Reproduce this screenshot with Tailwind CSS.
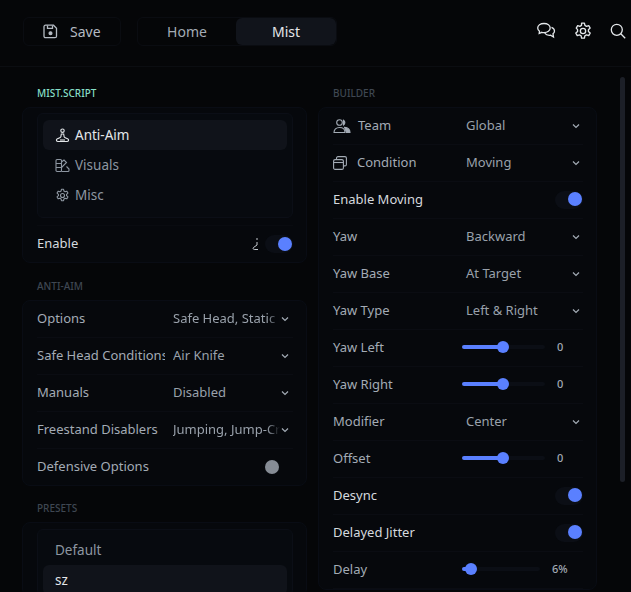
<!DOCTYPE html>
<html lang="en">
<head>
  <meta charset="UTF-8">
  <title>Mist</title>
  <script src="https://cdn.jsdelivr.net/npm/@tailwindcss/browser@4"></script>
</head>
<body class="bg-[#050608] font-['Noto_Sans',sans-serif] text-[13px] text-[#a3abb5]">
<div class="relative h-[592px] w-[631px] overflow-hidden">

  <!-- top bar -->
  <header class="flex h-[67px] items-start border-b border-[#0b0d11] pl-[23px] pt-[17px] text-[14px]">
    <button class="flex h-[29px] w-[98px] items-center rounded-md border border-[#0a0c11] pl-[19px] text-[#b4bac2]">
      <svg class="h-[15px] w-[15px]" viewBox="0 0 15 15" fill="none" stroke="#b4bac2" stroke-width="1.300"><path d="M2.500 1.200h8l3 3v8a1.500 1.500 0 0 1-1.500 1.500H2.500A1.500 1.500 0 0 1 1 12.200V2.700a1.500 1.500 0 0 1 1.500-1.500z"/><path d="M4.500 1.500v2.800h5V1.500"/><circle cx="7.500" cy="9.200" r="1.400" fill="#b4bac2"/></svg>
      <span class="ml-[12px]">Save</span>
    </button>
    <div class="ml-[16px] flex h-[29px] w-[200px] rounded-md border border-[#0a0c11]">
      <div class="flex w-[98px] items-center justify-center text-[#a3abb5]">Home</div>
      <div class="flex w-[100px] items-center justify-center rounded-md bg-[#11141b] text-[#e4e7ea]">Mist</div>
    </div>
    <div class="ml-auto flex items-center pr-[5px] pt-[4px] text-[#e4e7ea]">
      <svg class="h-[20px] w-[20px]" viewBox="0 0 20 20" fill="none" stroke="currentColor" stroke-width="1.300"><path d="M8 2.500c-3.600 0-6.300 1.900-6.300 4.500 0 1.300.7 2.400 1.800 3.200l-.3 2.300 2.600-1.200c.7.200 1.400.3 2.200.3 3.500 0 6.200-2 6.200-4.600S11.500 2.500 8 2.500z"/><path d="M15.500 6.300c1.800.7 3 2 3 3.700 0 1.100-.6 2-1.500 2.800l.5 3.200-3-1.800c-2.300.3-4.600-.5-5.800-2"/></svg>
      <svg class="ml-[17px] h-[20px] w-[20px]" viewBox="0 0 24 24" fill="none" stroke="currentColor" stroke-width="1.600" stroke-linejoin="round"><path d="M10.300 2.500h3.400l.6 2.800 1.900 1.100 2.700-.9 1.700 3-2.100 1.900v2.200l2.100 1.900-1.700 3-2.700-.9-1.900 1.100-.6 2.800h-3.400l-.6-2.800-1.900-1.100-2.700.9-1.700-3 2.100-1.900v-2.200L3.900 8.500l1.700-3 2.700.9 1.900-1.100z"/><circle cx="12" cy="12" r="3.200"/></svg>
      <svg class="ml-[17px] h-[16px] w-[16px]" viewBox="0 0 16 16" fill="none" stroke="currentColor" stroke-width="1.300"><circle cx="6.800" cy="6.800" r="5.500"/><path d="M10.800 10.800 15.200 15.200"/></svg>
    </div>
  </header>

  <!-- overlay scrollbar -->
  <div class="absolute left-[620px] top-[77px] h-[405px] w-[5px] rounded-full bg-[#1c1f27]"></div>

  <main class="flex items-start pl-[22px] pt-[19px]">

    <!-- left column -->
    <section class="w-[285px]">
      <h3 class="h-[21px] pl-[15px] text-[10px] leading-[14px] font-medium text-[#86dfc6]">MIST.SCRIPT</h3>
      <div class="rounded-lg border border-[#090c14] bg-[#06080c] pl-[14px] pr-[13px]">
        <div class="mt-[5px] flex h-[105px] flex-col rounded-md border border-[#0b0e16] bg-[#070a0f] px-[5px] pt-[6px] text-[13.5px]">
          <div class="flex h-[30px] items-center rounded-md bg-[#10131a] pl-[12px] text-[#e4e7ea]">
            <svg class="h-[15px] w-[15px]" viewBox="0 0 15 15" fill="none" stroke="currentColor" stroke-width="1.100"><circle cx="7.500" cy="2.700" r="1.700"/><path d="M5.800 9.200 6.300 6h2.400l.5 3.200"/><path d="M5.800 9.200 2 11c-1 .6-.7 2.500 1 2.500h9c1.700 0 2-1.900 1-2.500L9.200 9.200"/><path d="M5 12h5"/></svg>
            <span class="ml-[5px]">Anti-Aim</span>
          </div>
          <div class="flex h-[30px] items-center pl-[12px] text-[#8d96a1]">
            <svg class="h-[15px] w-[15px]" viewBox="0 0 15 15" fill="none" stroke="currentColor" stroke-width="1.100"><rect x="1" y="1.500" width="5.500" height="12" rx="1"/><path d="M1 5.500h5.500M1 9.500h5.500"/><path d="M6.500 4 9 2l2.500 2.500-5 5"/><path d="M6.500 13.500H13c.7 0 1-.5 1-1V11l-2.500-2.500"/></svg>
            <span class="ml-[5px]">Visuals</span>
          </div>
          <div class="flex h-[30px] items-center pl-[12px] text-[#8d96a1]">
            <svg class="h-[15px] w-[15px]" viewBox="0 0 24 24" fill="none" stroke="currentColor" stroke-width="1.800" stroke-linejoin="round"><path d="M10.300 2h3.400l.6 2.900 1.900 1.100 2.800-.9 1.700 3-2.200 2v2.200l2.200 2-1.700 3-2.800-.9-1.900 1.100-.6 2.900h-3.400l-.6-2.900-1.900-1.100-2.800.9-1.700-3 2.200-2v-2.200l-2.200-2 1.700-3 2.800.9 1.900-1.100z"/><circle cx="12" cy="12" r="3.200"/></svg>
            <span class="ml-[5px]">Misc</span>
          </div>
        </div>
        <div class="mt-[7px] flex h-[37px] items-center border-t border-[#090b10] text-[#d5d9de]">
          <span>Enable</span>
          <svg class="ml-auto h-[14px] w-[7px]" viewBox="0 0 7 14" fill="none" stroke="#c4c9cf" stroke-width="1"><path d="M5 1v2M5 5v3L1.500 10.500c-.8.800-.3 2 .8 2H6"/></svg>
          <div class="relative ml-[6px] h-[18px] w-[28px] rounded-full bg-[#0b0e15]"><span class="absolute right-[1px] top-[2px] h-[14px] w-[14px] rounded-full bg-[#5a80ff]"></span></div>
        </div>
      </div>

      <h3 class="mt-[16px] h-[21px] pl-[15px] text-[10px] leading-[14px] font-medium text-[#3f4752]">ANTI-AIM</h3>
      <div class="rounded-lg border border-[#090c14] bg-[#06080c] pl-[14px] pr-[13px]">
        <div class="flex h-[37px] items-center border-b border-[#0a0c12]">
          <span class="w-[136px] shrink-0 overflow-hidden whitespace-nowrap">Options</span>
          <span class="w-[107px] overflow-hidden whitespace-nowrap text-[#99a1ab] [mask-image:linear-gradient(90deg,#000_88%,transparent)]">Safe Head, Static Manuals</span>
          <svg class="ml-[1px] h-[8px] w-[8px] shrink-0" viewBox="0 0 8 8" fill="none" stroke="#a3abb5" stroke-width="1.200"><path d="M1 2.500 4 5.500 7 2.500"/></svg>
        </div>
        <div class="flex h-[37px] items-center border-b border-[#0a0c12]">
          <span class="w-[128px] shrink-0 overflow-hidden whitespace-nowrap">Safe Head Conditions</span>
          <span class="ml-[8px] w-[107px] overflow-hidden whitespace-nowrap text-[#99a1ab]">Air Knife</span>
          <svg class="ml-[1px] h-[8px] w-[8px] shrink-0" viewBox="0 0 8 8" fill="none" stroke="#a3abb5" stroke-width="1.200"><path d="M1 2.500 4 5.500 7 2.500"/></svg>
        </div>
        <div class="flex h-[37px] items-center border-b border-[#0a0c12]">
          <span class="w-[136px] shrink-0">Manuals</span>
          <span class="w-[107px] overflow-hidden whitespace-nowrap text-[#99a1ab]">Disabled</span>
          <svg class="ml-[1px] h-[8px] w-[8px] shrink-0" viewBox="0 0 8 8" fill="none" stroke="#a3abb5" stroke-width="1.200"><path d="M1 2.500 4 5.500 7 2.500"/></svg>
        </div>
        <div class="flex h-[37px] items-center border-b border-[#0a0c12]">
          <span class="w-[136px] shrink-0 whitespace-nowrap">Freestand Disablers</span>
          <span class="w-[107px] overflow-hidden whitespace-nowrap text-[#99a1ab] [mask-image:linear-gradient(90deg,#000_88%,transparent)]">Jumping, Jump-Crouch</span>
          <svg class="ml-[1px] h-[8px] w-[8px] shrink-0" viewBox="0 0 8 8" fill="none" stroke="#a3abb5" stroke-width="1.200"><path d="M1 2.500 4 5.500 7 2.500"/></svg>
        </div>
        <div class="flex h-[36px] items-center">
          <span>Defensive Options</span>
          <span class="ml-auto mr-[14px] h-[14px] w-[14px] rounded-full bg-[#868c95]"></span>
        </div>
      </div>

      <h3 class="mt-[15px] h-[21px] pl-[15px] text-[10px] leading-[14px] font-medium text-[#3f4752]">PRESETS</h3>
      <div class="rounded-lg border border-[#090c14] bg-[#06080c] pl-[14px] pr-[13px]">
        <div class="mt-[6px] rounded-md border border-[#0b0e16] bg-[#070a0f] px-[5px] pt-[5px] text-[13.5px]">
          <div class="flex h-[30px] items-center pl-[12px] text-[#8d96a1]">Default</div>
          <div class="flex h-[30px] items-center rounded-md bg-[#10131a] pl-[12px] text-[#e4e7ea]">sz</div>
        </div>
      </div>
    </section>

    <!-- right column -->
    <section class="ml-[11px] w-[279px]">
      <h3 class="h-[21px] pl-[15px] text-[10px] leading-[14px] font-medium text-[#3f4752]">BUILDER</h3>
      <div class="rounded-lg border border-[#090c14] bg-[#06080c] pl-[14px] pr-[13px]">
        <div class="flex h-[37px] items-center border-b border-[#0a0c12]">
          <svg class="h-[15px] w-[18px] shrink-0" viewBox="0 0 18 15" fill="none" stroke="currentColor" stroke-width="1.100"><circle cx="6.500" cy="3.500" r="2.800"/><path d="M1 13.500c0-3 2-5 5.500-5s5.500 2 5.500 5z"/><path d="M10.500 1.200a2.800 2.800 0 0 1 0 4.800z" fill="currentColor"/><path d="M11.500 8.300c3 .2 5.500 2 5.500 5.200h-3.500z" fill="currentColor"/></svg>
          <span class="ml-[7px] w-[108px] shrink-0">Team</span>
          <span class="text-[#99a1ab]">Global</span>
          <svg class="ml-auto mr-[3px] h-[8px] w-[8px]" viewBox="0 0 8 8" fill="none" stroke="#a3abb5" stroke-width="1.200"><path d="M1 2.500 4 5.500 7 2.500"/></svg>
        </div>
        <div class="flex h-[37px] items-center border-b border-[#0a0c12]">
          <svg class="h-[14px] w-[14px] shrink-0" viewBox="0 0 14 14" fill="none" stroke="currentColor" stroke-width="1.100"><rect x="0.600" y="3.600" width="9.800" height="9.800" rx="1.500"/><path d="M0.600 6.500h9.800"/><path d="M3.500 3.500V2.200C3.500 1.300 4.200.6 5 .6h6.900c.8 0 1.500.7 1.500 1.500v6.300c0 .8-.7 1.500-1.500 1.500h-1.500"/></svg>
          <span class="ml-[10px] w-[109px] shrink-0">Condition</span>
          <span class="text-[#99a1ab]">Moving</span>
          <svg class="ml-auto mr-[3px] h-[8px] w-[8px]" viewBox="0 0 8 8" fill="none" stroke="#a3abb5" stroke-width="1.200"><path d="M1 2.500 4 5.500 7 2.500"/></svg>
        </div>
        <div class="flex h-[37px] items-center border-b border-[#0a0c12] text-[#d5d9de]">
          <span>Enable Moving</span>
          <div class="relative ml-auto h-[18px] w-[28px] rounded-full bg-[#0b0e15]"><span class="absolute right-[1px] top-[1px] h-[14px] w-[14px] rounded-full bg-[#5a80ff]"></span></div>
        </div>
        <div class="flex h-[37px] items-center border-b border-[#0a0c12]">
          <span class="w-[133px] shrink-0">Yaw</span>
          <span class="text-[#99a1ab]">Backward</span>
          <svg class="ml-auto mr-[3px] h-[8px] w-[8px]" viewBox="0 0 8 8" fill="none" stroke="#a3abb5" stroke-width="1.200"><path d="M1 2.500 4 5.500 7 2.500"/></svg>
        </div>
        <div class="flex h-[37px] items-center border-b border-[#0a0c12]">
          <span class="w-[133px] shrink-0">Yaw Base</span>
          <span class="text-[#99a1ab]">At Target</span>
          <svg class="ml-auto mr-[3px] h-[8px] w-[8px]" viewBox="0 0 8 8" fill="none" stroke="#a3abb5" stroke-width="1.200"><path d="M1 2.500 4 5.500 7 2.500"/></svg>
        </div>
        <div class="flex h-[37px] items-center border-b border-[#0a0c12]">
          <span class="w-[133px] shrink-0">Yaw Type</span>
          <span class="text-[#99a1ab]">Left &amp; Right</span>
          <svg class="ml-auto mr-[3px] h-[8px] w-[8px]" viewBox="0 0 8 8" fill="none" stroke="#a3abb5" stroke-width="1.200"><path d="M1 2.500 4 5.500 7 2.500"/></svg>
        </div>
        <div class="flex h-[37px] items-center border-b border-[#0a0c12]">
          <span class="w-[129px] shrink-0">Yaw Left</span>
          <div class="relative mb-[2px] h-[4px] w-[83px] rounded-full bg-[#0b0e15]"><div class="h-[4px] w-[41px] rounded-full bg-[#5a80ff]"></div><span class="absolute left-[35px] top-[-4px] h-[12px] w-[12px] rounded-full bg-[#5a80ff]"></span></div>
          <span class="mb-[2px] ml-[12px] text-[11px] font-medium text-[#a3abb5]">0</span>
        </div>
        <div class="flex h-[37px] items-center border-b border-[#0a0c12]">
          <span class="w-[129px] shrink-0">Yaw Right</span>
          <div class="relative mb-[2px] h-[4px] w-[83px] rounded-full bg-[#0b0e15]"><div class="h-[4px] w-[41px] rounded-full bg-[#5a80ff]"></div><span class="absolute left-[35px] top-[-4px] h-[12px] w-[12px] rounded-full bg-[#5a80ff]"></span></div>
          <span class="mb-[2px] ml-[12px] text-[11px] font-medium text-[#a3abb5]">0</span>
        </div>
        <div class="flex h-[37px] items-center border-b border-[#0a0c12]">
          <span class="w-[133px] shrink-0">Modifier</span>
          <span class="text-[#99a1ab]">Center</span>
          <svg class="ml-auto mr-[3px] h-[8px] w-[8px]" viewBox="0 0 8 8" fill="none" stroke="#a3abb5" stroke-width="1.200"><path d="M1 2.500 4 5.500 7 2.500"/></svg>
        </div>
        <div class="flex h-[37px] items-center border-b border-[#0a0c12]">
          <span class="w-[129px] shrink-0">Offset</span>
          <div class="relative mb-[2px] h-[4px] w-[83px] rounded-full bg-[#0b0e15]"><div class="h-[4px] w-[41px] rounded-full bg-[#5a80ff]"></div><span class="absolute left-[35px] top-[-4px] h-[12px] w-[12px] rounded-full bg-[#5a80ff]"></span></div>
          <span class="mb-[2px] ml-[12px] text-[11px] font-medium text-[#a3abb5]">0</span>
        </div>
        <div class="flex h-[37px] items-center border-b border-[#0a0c12] text-[#d5d9de]">
          <span>Desync</span>
          <div class="relative ml-auto h-[18px] w-[28px] rounded-full bg-[#0b0e15]"><span class="absolute right-[1px] top-[1px] h-[14px] w-[14px] rounded-full bg-[#5a80ff]"></span></div>
        </div>
        <div class="flex h-[37px] items-center border-b border-[#0a0c12] text-[#d5d9de]">
          <span>Delayed Jitter</span>
          <div class="relative ml-auto h-[18px] w-[28px] rounded-full bg-[#0b0e15]"><span class="absolute right-[1px] top-[1px] h-[14px] w-[14px] rounded-full bg-[#5a80ff]"></span></div>
        </div>
        <div class="flex h-[37px] items-center border-b border-[#0a0c12]">
          <span class="w-[129px] shrink-0">Delay</span>
          <div class="relative mb-[2px] h-[4px] w-[78px] rounded-full bg-[#0b0e15]"><div class="h-[4px] w-[9px] rounded-full bg-[#5a80ff]"></div><span class="absolute left-[3px] top-[-4px] h-[12px] w-[12px] rounded-full bg-[#5a80ff]"></span></div>
          <span class="mb-[2px] ml-[12px] text-[11px] font-medium text-[#a3abb5]">6%</span>
        </div>
      </div>
    </section>
  </main>
</div>
</body>
</html>
